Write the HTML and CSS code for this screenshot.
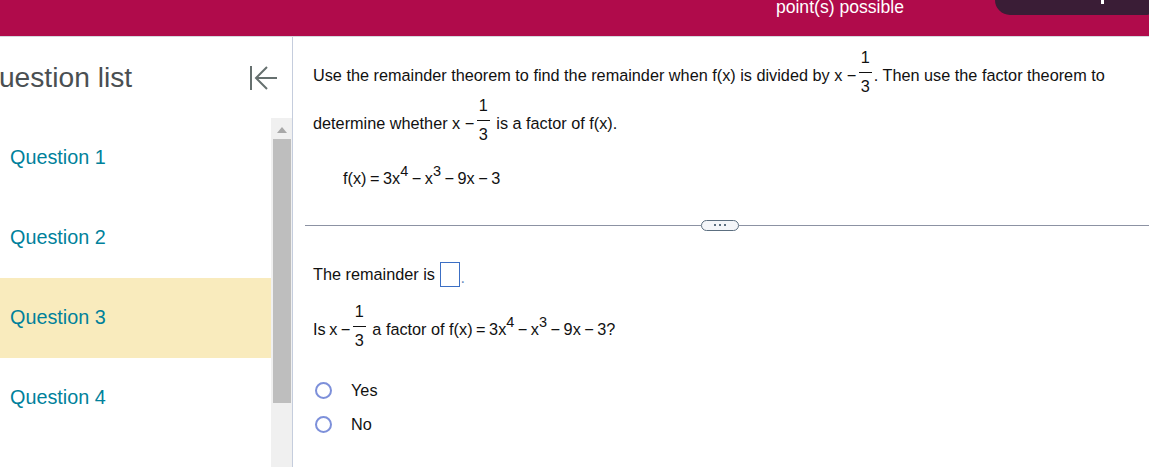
FILE: index.html
```html
<!DOCTYPE html>
<html lang="en">

<head>
    <meta charset="UTF-8">
    <title>Question 3</title>
    <link rel="stylesheet" href="styles.css">
</head>

<body>
    <!-- HEADER -->
    <header class="topBar">
        <span class="points">point(s) possible</span>
        <div class="scorePill"><span class="scoreTick"></span></div>
    </header>

    <main class="page">
        <!-- QUESTION LIST -->
        <aside class="sidebar">
            <div class="sidebarHead">
                <h2 class="sidebarTitle">Question list</h2>
                <svg class="collapseIcon" width="30" height="28" viewBox="0 0 30 28">
                    <path d="M3 2V26" fill="none" stroke="#66706f" stroke-width="2"/>
                    <path d="M29 14H8M19 3L8 14L19 25" fill="none" stroke="#66706f" stroke-width="2"/>
                </svg>
            </div>
            <div class="listWrap">
                <ul class="questionList">
                    <li class="questionItem">Question 1</li>
                    <li class="questionItem">Question 2</li>
                    <li class="questionItem current">Question 3</li>
                    <li class="questionItem">Question 4</li>
                </ul>
                <div class="scrollTrack">
                    <span class="scrollArrow"></span>
                    <div class="scrollThumb"></div>
                </div>
            </div>
        </aside>

        <!-- QUESTION -->
        <section class="content">
            <p class="line first">Use the remainder theorem to find the remainder when f(x) is divided by x − <span class="frac"><span class="num">1</span><span class="den">3</span></span>. Then use the factor theorem to</p>
            <p class="line">determine whether x − <span class="frac"><span class="num">1</span><span class="den">3</span></span> is a factor of f(x).</p>
            <p class="formula math">f(x) = 3x<sup>4</sup> − x<sup>3</sup> − 9x − 3</p>

            <div class="divider">
                <span class="dividerLine short"></span>
                <span class="moreBtn"><i></i><i></i><i></i></span>
                <span class="dividerLine"></span>
            </div>

            <p class="remainder">The remainder is <span class="answerBox"></span><span class="dot">.</span></p>
            <p class="line isFactor"><span class="tightWords">Is x −</span> <span class="frac"><span class="num">1</span><span class="den">3</span></span> a factor of <span class="math">f(x) = 3x<sup>4</sup> − x<sup>3</sup> − 9x − 3?</span></p>

            <div class="option first"><span class="radio"></span>Yes</div>
            <div class="option"><span class="radio"></span>No</div>
        </section>
    </main>
</body>

</html>
```

FILE: styles.css
```css
html, body {
    margin: 0;
    height: 467px;
    overflow: hidden;
    background: white;
    font-family: "Liberation Sans", Arial, sans-serif;
}

.topBar {
    height: 36px;
    background: #b00b4b;
    border-bottom: 1px solid #d5d8de;
    display: flex;
    justify-content: flex-end;
    overflow: hidden;
}

.points {
    color: white;
    font-size: 17.6px;
    line-height: 15px;
    margin-right: 91px;
}

.scorePill {
    width: 165px;
    height: 15px;
    margin-right: -11px;
    background: #3a1d36;
    border-radius: 0 0 18px 18px;
    position: relative;
}

.scoreTick {
    position: absolute;
    left: 106px;
    top: 0;
    width: 3px;
    height: 4px;
    background: white;
}

.page {
    display: flex;
    height: 430px;
}

.sidebar {
    width: 292px;
    flex: none;
    border-right: 1px solid #c5cddd;
    overflow: hidden;
}

.sidebarHead {
    height: 81px;
    display: flex;
    align-items: center;
    justify-content: space-between;
    padding-right: 14px;
}

.sidebarTitle {
    margin: 0 0 0 -23px;
    font-size: 28.2px;
    font-weight: normal;
    color: #4a4f52;
}

.listWrap {
    display: flex;
    height: 349px;
}

.questionList {
    list-style: none;
    margin: 0;
    padding: 0;
    width: 271px;
    flex: none;
}

.questionItem {
    height: 80px;
    line-height: 78px;
    padding-left: 10px;
    font-size: 19.8px;
    color: #00819b;
}

.current {
    background: #f9ebbd;
}

.scrollTrack {
    width: 21px;
    background: #f0f0f0;
    padding: 0 1px 0 2px;
    box-sizing: border-box;
}

.scrollArrow {
    display: block;
    width: 0;
    margin: 9px auto 6px;
    border-left: 5px solid transparent;
    border-right: 5px solid transparent;
    border-bottom: 6px solid #a8a8a8;
}

.scrollThumb {
    height: 264px;
    background: #bebebe;
}

.content {
    flex: 1;
    min-width: 0;
    padding-left: 20px;
    font-size: 16.25px;
    color: #111;
}

p {
    margin: 0;
}

.line {
    height: 48px;
    line-height: 48px;
    white-space: nowrap;
}

.first {
    margin-top: 14px;
}

.frac {
    display: inline-flex;
    flex-direction: column;
    align-items: center;
    vertical-align: middle;
    width: 13px;
    margin: -7px 2px 0 -2px;
}

.tightWords {
    word-spacing: -1px;
}

.num {
    line-height: 19px;
    padding-bottom: 5px;
}

.den {
    border-top: 1px solid #111;
    width: 100%;
    text-align: center;
    line-height: 26px;
}

sup {
    font-size: 14.5px;
    line-height: 0;
    vertical-align: 8px;
}

.math {
    word-spacing: -1px;
}

.formula {
    margin: 19px 0 0 30px;
    line-height: 24px;
}

.divider {
    display: flex;
    align-items: center;
    margin: 29px 0 0 -8px;
    height: 12px;
}

.dividerLine {
    flex: 1;
    height: 1px;
    background: #8c92a3;
}

.short {
    flex: none;
    width: 396px;
}

.moreBtn {
    width: 38px;
    height: 11px;
    box-sizing: border-box;
    border: 1px solid #5c6f80;
    border-radius: 6px;
    background: #f4f6f9;
    display: flex;
    align-items: center;
    justify-content: center;
    gap: 3px;
}

.moreBtn i {
    width: 2px;
    height: 2px;
    background: #5c6f80;
}

.remainder {
    margin-top: 30px;
    height: 26px;
    display: flex;
    align-items: center;
    white-space: pre;
}

.answerBox {
    width: 20px;
    height: 25px;
    box-sizing: border-box;
    border: 1px solid #3c6fc4;
    margin-left: 1px;
}

.dot {
    color: #6f8fc0;
    align-self: flex-end;
}

.isFactor {
    margin-top: 18px;
}

.option {
    display: flex;
    align-items: center;
    height: 34px;
}

.option.first {
    margin-top: 20px;
}

.radio {
    width: 17px;
    height: 17px;
    box-sizing: border-box;
    border: 2px solid #7d90da;
    border-radius: 50%;
    margin-right: 19px;
    margin-left: 2px;
}
```
